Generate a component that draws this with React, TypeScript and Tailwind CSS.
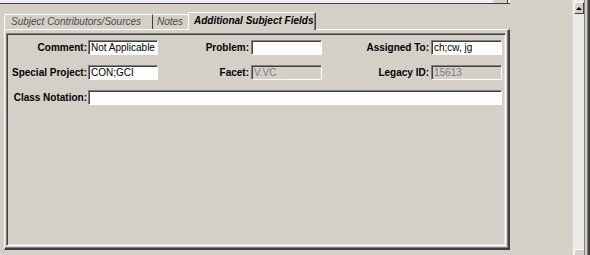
const FONT = "font-['Liberation_Sans',Arial,sans-serif]";

function Field({ value, disabled, className }: { value?: string; disabled?: boolean; className?: string }) {
  return (
    <div
      className={`h-[15px] flex items-center pl-[2px] text-[10px] leading-none whitespace-nowrap overflow-hidden border border-[#808080] border-b-white border-r-white shadow-[inset_1px_1px_0_#404040] ${
        disabled ? "bg-[#d4d0c8] text-[#7c7c7c]" : "bg-[#fdfdfb] text-black"
      } ${className ?? ""}`}
    >
      {value}
    </div>
  );
}

function Label({ children, className }: { children: string; className?: string }) {
  return <div className={`text-right text-[10px] font-bold leading-none whitespace-nowrap ${className ?? ""}`}>{children}</div>;
}

export default function App() {
  return (
    <div className={`${FONT} w-[590px] h-[255px] overflow-hidden bg-[#d4d0c8] flex text-black`}>
      {/* main area */}
      <div className="w-[572px] flex flex-col">
        {/* bottom edge of the box above */}
        <div className="w-[510px] h-[4px] flex bg-[#eef0f4] border-b border-[#404040]">
          <div className="ml-auto mr-[2px] w-[15px] bg-[#d4d0c8] border-r border-[#404040]" />
        </div>

        {/* tabs */}
        <div className="mt-[8px] h-[17px] pl-[4px] flex items-end whitespace-nowrap">
          <div className="h-[15px] w-[149px] pl-[6px] flex items-center border-t border-l border-white border-r border-r-[#404040] rounded-tl-[2px] text-[10px] italic text-[#4a4a4a] leading-none">
            Subject Contributors/Sources
          </div>
          <div className="h-[15px] w-[35px] pl-[4px] flex items-center border-t border-white text-[10px] italic text-[#4a4a4a] leading-none">
            Notes
          </div>
          <div className="relative z-10 -mb-px h-[18px] w-[128px] pl-[5px] pb-[2px] flex items-center bg-[#d4d0c8] border-t border-l border-white border-r border-r-[#404040] shadow-[inset_-1px_0_0_#808080] rounded-t-[2px] text-[10px] italic font-bold leading-none">
            Additional Subject Fields
          </div>
        </div>

        {/* tab page */}
        <div className="ml-[4px] w-[506px] h-[221px] border-t border-l border-white border-r-2 border-b-2 border-r-[#404040] border-b-[#404040] shadow-[inset_-1px_-1px_0_#808080]">
          <div className="ml-[1px] mt-[3px] w-[500px] h-[213px] border border-[#808080] border-b-white border-r-white shadow-[inset_1px_1px_0_#404040,inset_-1px_-1px_0_#e4e2dc]">
            <div className="pt-[6px] pl-[1px] grid grid-cols-[80px_70px_93px_71px_109px_71px] gap-y-[10px] items-center">
              <Label className="pr-[1px]">Comment:</Label>
              <Field value="Not Applicable" />
              <Label className="pr-[2px]">Problem:</Label>
              <Field />
              <Label className="pr-[2px]">Assigned To:</Label>
              <Field value="ch;cw, jg" />

              <Label className="pr-[1px]">Special Project:</Label>
              <Field value="CON;GCI" />
              <Label className="pr-[2px]">Facet:</Label>
              <Field value="V.VC" disabled />
              <Label className="pr-[2px]">Legacy ID:</Label>
              <Field value="15613" disabled />

              <Label className="pr-[1px]">Class Notation:</Label>
              <Field className="col-span-5" />
            </div>
          </div>
        </div>
      </div>

      {/* vertical scrollbar */}
      <div className="w-[18px] h-full flex">
        <div className="w-[12px] h-full flex flex-col justify-between bg-[#ebeae6] border-l border-[#dcdad4]">
          <div className="mt-[2px] ml-[1px] w-[10px] h-[12px] flex items-center justify-center bg-[#d4d0c8] border-t border-l border-white border-r border-b border-r-[#404040] border-b-[#404040]">
            <div className="w-0 h-0 border-l-[3px] border-r-[3px] border-b-[3px] border-l-transparent border-r-transparent border-b-black" />
          </div>
          <div className="mb-[-6px] ml-[1px] w-[10px] h-[12px] bg-[#d4d0c8] border-t border-l border-white" />
        </div>
        <div className="w-px h-full bg-[#808080]" />
        <div className="w-[2px] h-full bg-[#d4d0c8]" />
        <div className="w-px h-full bg-[#808080]" />
        <div className="w-[2px] h-full bg-[#404040]" />
      </div>
    </div>
  );
}
